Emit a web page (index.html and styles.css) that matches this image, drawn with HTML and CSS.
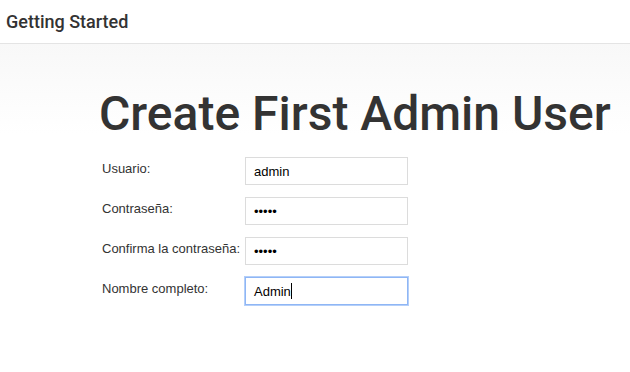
FILE: index.html
```html
<!DOCTYPE html>
<html lang="es">
<head>
<meta charset="utf-8">
<title>Getting Started</title>
<link rel="stylesheet" href="styles.css">
</head>
<body>
<header class="topbar">
  <h1 class="topbar-title">Getting Started</h1>
</header>
<main class="content">
  <h2 class="page-title">Create First Admin User</h2>
  <form class="admin-form">
    <label class="form-label" for="user">Usuario:</label>
    <input class="form-input" id="user" type="text" value="admin">
    <label class="form-label" for="pass">Contraseña:</label>
    <input class="form-input" id="pass" type="password" value="admin">
    <label class="form-label" for="pass2">Confirma la contraseña:</label>
    <input class="form-input" id="pass2" type="password" value="admin">
    <label class="form-label" for="name">Nombre completo:</label>
    <div class="form-input is-focused" id="name" role="textbox"><span>Admin</span><span class="caret"></span></div>
  </form>
</main>
</body>
</html>
```
FILE: styles.css
```css
html, body {
  margin: 0;
  padding: 0;
  background: #ffffff;
}
body {
  width: 630px;
  height: 372px;
  overflow: hidden;
  font-family: Roboto, "Liberation Sans", sans-serif;
  color: #333333;
}
.topbar {
  height: 43px;
  border-bottom: 1px solid #e4e4e4;
  display: flex;
  align-items: center;
  padding-left: 6px;
  background: #ffffff;
}
.topbar-title {
  margin: 0;
  font-size: 18px;
  font-weight: 500;
  color: #333333;
}
.content {
  background: linear-gradient(to bottom, #f8f8f8 0px, #ffffff 90px);
  padding: 42px 0 0 99px;
  height: 290px;
}
.page-title {
  margin: 0;
  font-family: Roboto, sans-serif;
  font-size: 48px;
  font-weight: 500;
  line-height: 56px;
  color: #333333;
}
.admin-form {
  margin-top: 15px;
  display: grid;
  grid-template-columns: 143px 163px;
  row-gap: 12px;
  padding-left: 3px;
  font-family: "Liberation Sans", Arial, sans-serif;
  font-size: 13px;
}
.form-label {
  align-self: start;
  padding-top: 4px;
  line-height: 15px;
  color: #333333;
}
.form-input {
  box-sizing: border-box;
  height: 28px;
  width: 163px;
  margin: 0;
  border: 1px solid #dcdcdc;
  border-radius: 0;
  padding: 0 8px;
  font-family: "Liberation Sans", Arial, sans-serif;
  font-size: 13px;
  color: #000000;
  background: #ffffff;
  outline: none;
}
.is-focused {
  display: flex;
  align-items: center;
  border: 1px solid #8fb6f5;
  box-shadow: 0 0 0 1px #b4cff9;
}
.caret {
  display: inline-block;
  width: 1px;
  height: 16px;
  background: #000000;
  margin-left: 0;
}
```
